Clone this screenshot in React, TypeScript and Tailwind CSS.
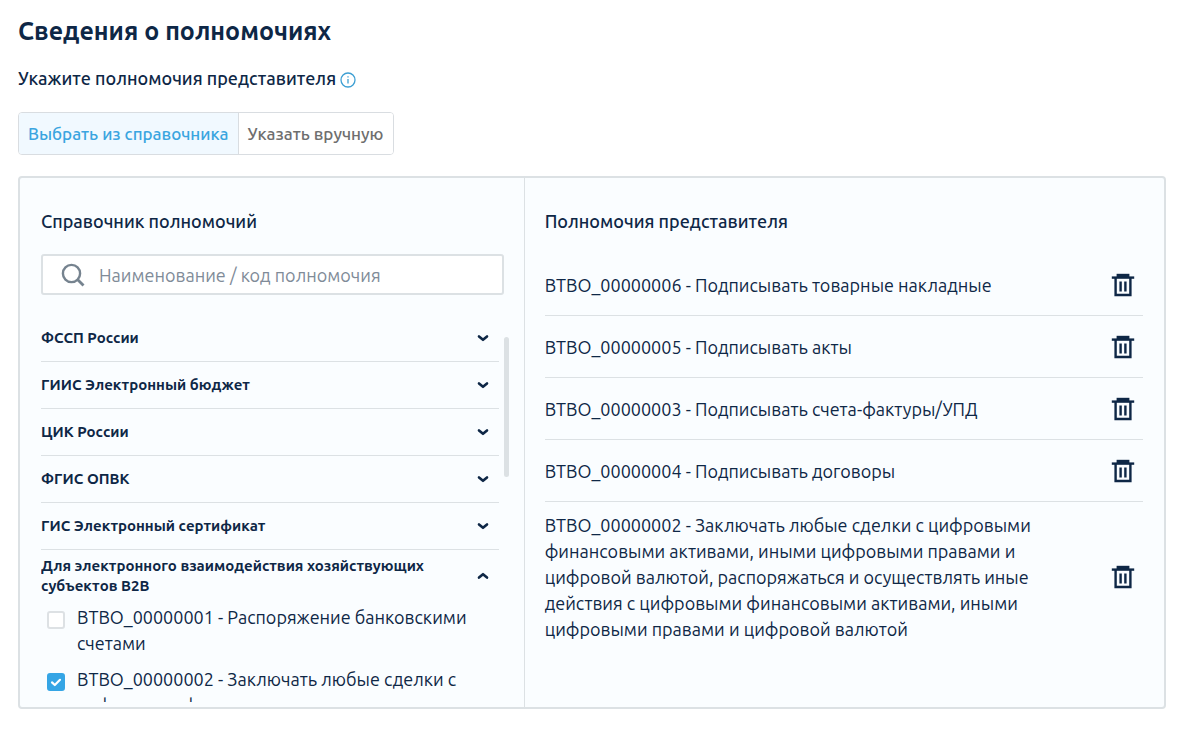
import React, { useState } from 'react';

interface Power {
  code: string;
  title: string;
}

const GROUPS = [
  'ФССП России',
  'ГИИС Электронный бюджет',
  'ЦИК России',
  'ФГИС ОПВК',
  'ГИС Электронный сертификат',
];

const DIGITAL_DEALS =
  'Заключать любые сделки с цифровыми финансовыми активами, иными цифровыми правами и цифровой валютой, распоряжаться и осуществлять иные действия с цифровыми финансовыми активами, иными цифровыми правами и цифровой валютой';

const B2B_POWERS: Power[] = [
  { code: 'BTBO_00000001', title: 'Распоряжение банковскими счетами' },
  { code: 'BTBO_00000002', title: DIGITAL_DEALS },
];

const INITIAL_SELECTED: Power[] = [
  { code: 'BTBO_00000006', title: 'Подписывать товарные накладные' },
  { code: 'BTBO_00000005', title: 'Подписывать акты' },
  { code: 'BTBO_00000003', title: 'Подписывать счета-фактуры/УПД' },
  { code: 'BTBO_00000004', title: 'Подписывать договоры' },
  { code: 'BTBO_00000002', title: DIGITAL_DEALS },
];

const InfoIcon = () => (
  <svg viewBox="0 0 16 16" className="w-4 h-4" fill="none" stroke="currentColor" strokeWidth="1.3">
    <circle cx="8" cy="8" r="7" />
    <path d="M8 7v4.5" />
    <path d="M8 4.2v1.4" />
  </svg>
);

const SearchIcon = () => (
  <svg viewBox="0 0 24 24" className="w-6 h-6 shrink-0 text-[#76838f]" fill="none" stroke="currentColor" strokeWidth="2.4">
    <circle cx="10.5" cy="10.5" r="8.6" />
    <path d="M16.5 16.5l6 6" strokeWidth="2.8" />
  </svg>
);

const Chevron = ({ up }: { up?: boolean }) => (
  <svg
    viewBox="0 0 12 8"
    className={`w-3 h-2 shrink-0 ${up ? 'rotate-180' : ''}`}
    fill="none"
    stroke="currentColor"
    strokeWidth="2.6"
    strokeLinecap="round"
    strokeLinejoin="round"
  >
    <path d="M2 2.4L6 5.8l4-3.4" />
  </svg>
);

const TrashIcon = () => (
  <svg viewBox="0 0 24 24" className="w-6 h-6" fill="none" stroke="currentColor">
    <path d="M.8 4.6h22.4" strokeWidth="2.4" />
    <path d="M5.6 2.4h12.8" strokeWidth="3.2" />
    <path d="M4.6 4v18h14.8V4" strokeWidth="2.4" />
    <path d="M9.6 8.4v10M14.4 8.4v10" strokeWidth="2.4" />
  </svg>
);

const PowerOption = ({
  power,
  checked,
  onToggle,
}: {
  power: Power;
  checked: boolean;
  onToggle: () => void;
}) => (
  <label className="flex items-start gap-3 pl-1.5 pr-4 cursor-pointer">
    <span className="grid shrink-0 mt-[7px]">
      <input
        type="checkbox"
        checked={checked}
        onChange={onToggle}
        className="appearance-none col-start-1 row-start-1 w-[18px] h-[18px] rounded-[3px] border-2 border-[#dde1e4] bg-white checked:border-[#35a5e5] checked:bg-[#35a5e5]"
      />
      {checked && (
        <svg
          viewBox="0 0 18 18"
          className="col-start-1 row-start-1 w-[18px] h-[18px] pointer-events-none"
          fill="none"
          stroke="white"
          strokeWidth="2.2"
          strokeLinecap="round"
          strokeLinejoin="round"
        >
          <path d="M5 9.4l2.8 2.6L13 6.8" />
        </svg>
      )}
    </span>
    <span className="text-lg leading-[26px]">{`${power.code} - ${power.title}`}</span>
  </label>
);

const App: React.FC = () => {
  const [mode, setMode] = useState<'list' | 'manual'>('list');
  const [query, setQuery] = useState('');
  const [selected, setSelected] = useState<Power[]>(INITIAL_SELECTED);

  const remove = (code: string) => setSelected(prev => prev.filter(p => p.code !== code));

  const toggle = (power: Power) => {
    if (selected.some(p => p.code === power.code)) {
      remove(power.code);
    } else {
      setSelected(prev => [...prev, power]);
    }
  };

  return (
    <main className="min-h-screen bg-white text-[#0e2746] pl-[18px] pr-[34px] pt-[15px] pb-5 font-['Ubuntu','Noto_Sans',sans-serif]">
      <h1 className="text-[25px] leading-8 font-semibold">Сведения о полномочиях</h1>

      <div className="flex items-center gap-1 mt-[19px]">
        <h2 className="text-lg leading-6 font-medium">Укажите полномочия представителя</h2>
        <button type="button" aria-label="Подсказка" className="mt-1 text-[#3d9fd3]">
          <InfoIcon />
        </button>
      </div>

      <div className="flex w-fit mt-[22px] rounded border border-[#d9dde1] overflow-hidden text-[17px] font-medium">
        <button
          type="button"
          onClick={() => setMode('list')}
          className={`h-[41px] px-[9px] border-r border-[#d9dde1] ${mode === 'list' ? 'bg-[#f1f9ff] text-[#3aa5e0]' : 'bg-white text-[#6e6e6e]'}`}
        >
          Выбрать из справочника
        </button>
        <button
          type="button"
          onClick={() => setMode('manual')}
          className={`h-[41px] px-[9px] ${mode === 'manual' ? 'bg-[#f1f9ff] text-[#3aa5e0]' : 'bg-white text-[#6e6e6e]'}`}
        >
          Указать вручную
        </button>
      </div>

      <div className="grid grid-cols-[15fr_19fr] mt-[21px] rounded border-2 border-[#dce1e4] bg-[#fafdff]">
        <section className="min-w-0 pt-[31px] pb-[5px] pl-[21px] border-r border-[#dce1e4]">
          <h3 className="text-lg leading-6 font-medium">Справочник полномочий</h3>

          <label className="flex items-center gap-3.5 h-[41px] mt-[21px] mr-5 px-[18px] rounded-[3px] border-2 border-[#dce1e4] bg-white">
            <SearchIcon />
            <input
              type="text"
              value={query}
              onChange={e => setQuery(e.target.value)}
              placeholder="Наименование / код полномочия"
              aria-label="Наименование / код полномочия"
              className="w-full min-w-0 bg-transparent text-lg leading-6 placeholder:text-[#808b98] focus:outline-none"
            />
          </label>

          <div className="flex mt-5">
            <div className="flex-1 min-w-0 h-[387px] overflow-y-auto [scrollbar-width:none]">
              {GROUPS.map(group => (
                <button
                  key={group}
                  type="button"
                  className="flex items-center justify-between w-full h-[47px] pr-2.5 border-b border-[#dce1e4] text-left text-[15px] font-semibold"
                >
                  {group}
                  <Chevron />
                </button>
              ))}

              <button
                type="button"
                className="flex items-center justify-between w-full pt-1.5 pr-2.5 text-left text-[15px] leading-5 font-semibold"
              >
                <span className="max-w-[400px]">Для электронного взаимодействия хозяйствующих субъектов B2B</span>
                <Chevron up />
              </button>

              <div className="flex flex-col gap-2.5 mt-2">
                {B2B_POWERS.map(power => (
                  <PowerOption
                    key={power.code}
                    power={power}
                    checked={selected.some(p => p.code === power.code)}
                    onToggle={() => toggle(power)}
                  />
                ))}
              </div>
            </div>
            <div className="w-[5px] h-[140px] mt-[22px] ml-[5px] mr-[15px] rounded-full bg-[#dce1e4]" />
          </div>
        </section>

        <section className="min-w-0 pt-[31px] pl-5 pr-[21px]">
          <h3 className="text-lg leading-6 font-medium">Полномочия представителя</h3>

          <ul className="mt-[21px]">
            {selected.map(power => (
              <li
                key={power.code}
                className="flex items-center justify-between min-h-[62px] py-2.5 pr-2 border-b border-[#dce1e4] last:border-b-0"
              >
                <span className="max-w-[500px] text-lg leading-[26px]">{`${power.code} - ${power.title}`}</span>
                <button type="button" aria-label={`Удалить ${power.code}`} onClick={() => remove(power.code)}>
                  <TrashIcon />
                </button>
              </li>
            ))}
          </ul>
        </section>
      </div>
    </main>
  );
};

export default App;
